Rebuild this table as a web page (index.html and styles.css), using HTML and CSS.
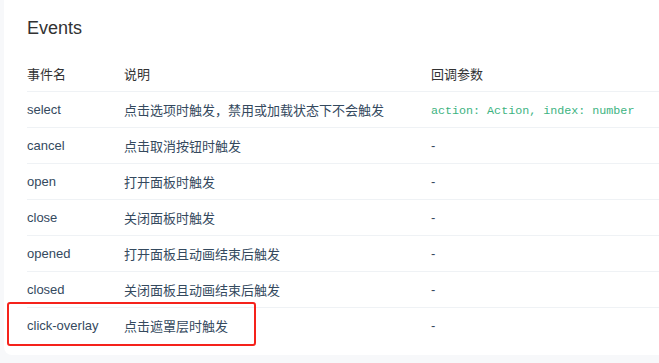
FILE: index.html
```html
<!doctype html>
<html>
  <head>
    <meta charset="UTF-8" />
    <title>ActionSheet Events</title>
    <link rel="stylesheet" href="styles.css">
  </head>
  <body>
    <div class="doc-card">
      <h3>Events</h3>

      <table class="doc-table">
        <thead>
          <tr>
            <th class="col-name">事件名</th>
            <th class="col-desc">说明</th>
            <th>回调参数</th>
          </tr>
        </thead>
        <tbody>
          <tr>
            <td>select</td>
            <td>点击选项时触发，禁用或加载状态下不会触发</td>
            <td><code>action: Action, index: number</code></td>
          </tr>
          <tr>
            <td>cancel</td>
            <td>点击取消按钮时触发</td>
            <td>-</td>
          </tr>
          <tr>
            <td>open</td>
            <td>打开面板时触发</td>
            <td>-</td>
          </tr>
          <tr>
            <td>close</td>
            <td>关闭面板时触发</td>
            <td>-</td>
          </tr>
          <tr>
            <td>opened</td>
            <td>打开面板且动画结束后触发</td>
            <td>-</td>
          </tr>
          <tr>
            <td>closed</td>
            <td>关闭面板且动画结束后触发</td>
            <td>-</td>
          </tr>
          <tr class="marked">
            <td>click-overlay</td>
            <td>点击遮罩层时触发</td>
            <td>-</td>
          </tr>
        </tbody>
      </table>
    </div>
  </body>
</html>
```

FILE: styles.css
```css
body {
  margin: 0;
  padding: 0;
  background-color: #f7f8fa;
  font-family: "Liberation Sans", Arial, "Noto Sans CJK SC", sans-serif;
  color: #34495e;
  overflow: hidden;
}

.doc-card {
  margin-left: 4px;
  padding: 15px 0 12px 23px;
  background: white;
  border-radius: 0 0 0 8px;
}

.doc-card h3 {
  margin: 0;
  font-size: 18px;
  font-weight: normal;
  line-height: 26px;
  color: #323233;
}

.doc-table {
  width: 100%;
  margin-top: 15px;
  border-collapse: collapse;
  table-layout: fixed;
  font-size: 13px;
}

.doc-table th,
.doc-table td {
  height: 35px;
  padding: 0;
  text-align: left;
  vertical-align: middle;
  white-space: nowrap;
}

.doc-table th {
  font-weight: normal;
  color: #323233;
}

.doc-table td {
  border-top: 1px solid #eff2f5;
}

.col-name {
  width: 97px;
}

.col-desc {
  width: 307px;
}

.doc-table code {
  font-family: "Liberation Mono", "Courier New", monospace;
  font-size: 11.7px;
  color: #3db37f;
}

/* highlight box drawn around a row */
.marked td:first-child {
  position: relative;
}

.marked td:first-child::after {
  content: "";
  position: absolute;
  left: -20px;
  top: -6px;
  width: 245px;
  height: 40px;
  border: 2px solid #f5221b;
  border-radius: 3px;
}
```
